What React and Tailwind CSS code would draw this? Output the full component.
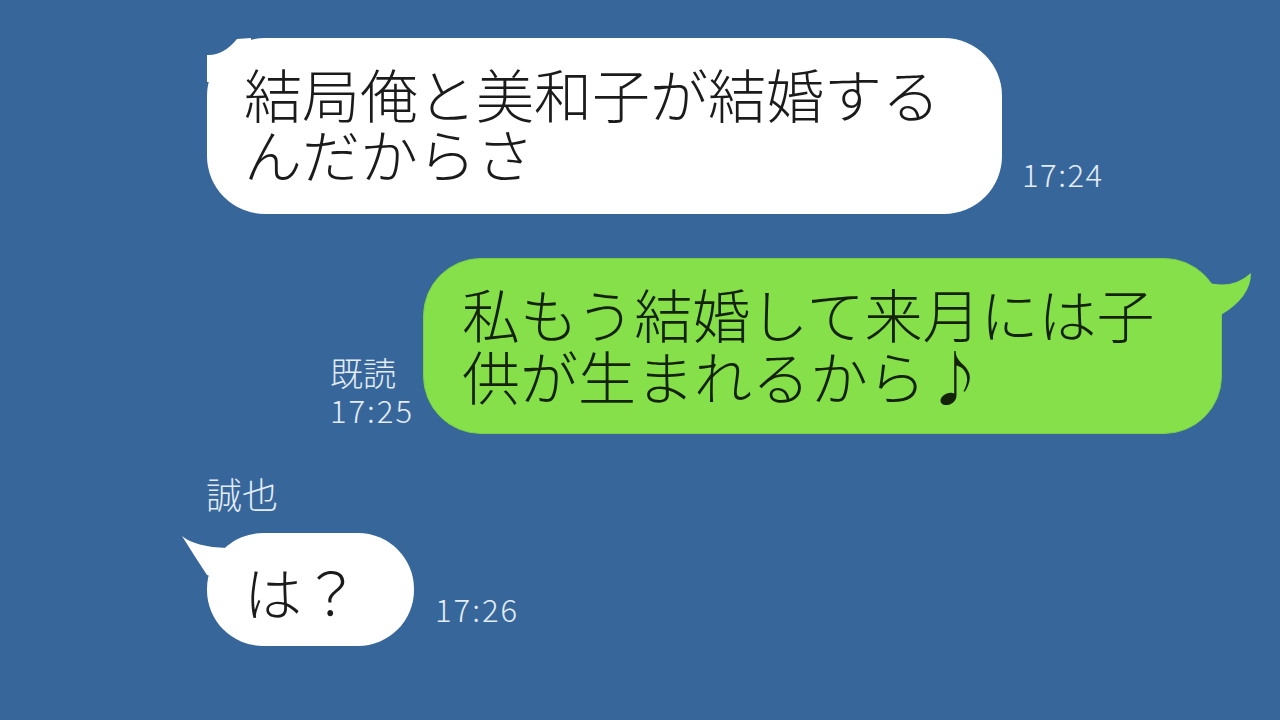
import React from "react";

const jp = "font-['Noto_Sans_CJK_JP','Noto_Sans',sans-serif]";

export default function App() {
  return (
    <div className={`w-[1280px] h-[720px] bg-[#37669b] overflow-hidden flex flex-col font-light ${jp}`}>
      {/* Row 1 */}
      <div className="flex items-end ml-[207px] mt-[38px]">
        <div className="relative w-[795px] h-[176px] rounded-[58px] bg-white pl-[37px] pt-[25px] text-[58px] leading-[60px] text-[#1b1b1b] whitespace-nowrap">
          <svg className="absolute left-0 top-0" width="44" height="44" viewBox="0 0 44 44">
            <path d="M0 17 Q16 18 30 1 L44 0 L44 44 L0 44 Z" fill="#ffffff" />
          </svg>
          <div className="relative">
            結局俺と美和子が結婚する
            <br />
            んだからさ
          </div>
        </div>
        <div className="ml-[20px] mb-[25px] text-[31px] leading-none tracking-[1.5px] text-[#e3ecf7]">17:24</div>
      </div>

      {/* Row 2 */}
      <div className="flex items-end justify-end mr-[58px] mt-[44px]">
        <div className="mr-[9px] mb-[6px] flex flex-col text-[31px] leading-[37px] text-[#e3ecf7]">
          <span className="text-[33px]">既読</span>
          <span className="tracking-[2px]">17:25</span>
        </div>
        <div className="relative w-[799px] h-[176px] rounded-[58px] bg-[#86e04a] border border-[#7bcf45] pl-[38px] pt-[23px] text-[58px] leading-[62px] text-[#142208] whitespace-nowrap">
          <svg className="absolute right-[-32px] top-[12px]" width="50" height="46" viewBox="0 0 50 46">
            <path d="M0 10 Q28 20 48 2 Q48 26 18 44 L0 44 Z" fill="#86e04a" />
          </svg>
          <div className="relative">
            私もう結婚して来月には子
            <br />
            供が生まれるから♪
          </div>
        </div>
      </div>

      {/* Row 3 */}
      <div className="ml-[206px] mt-[40px] text-[36px] leading-[38px] text-[#e3ecf7]">誠也</div>
      <div className="flex items-end ml-[207px] mt-[21px]">
        <div className="relative w-[207px] h-[113px] rounded-[56px] bg-white pl-[37px] pt-[28px] text-[58px] leading-[60px] text-[#1b1b1b] whitespace-nowrap">
          <svg className="absolute left-[-26px] top-[2px]" width="60" height="50" viewBox="0 0 60 50">
            <path d="M1 1 Q14 12 46 13 L60 10 L60 50 L26 40 Q14 22 1 1 Z" fill="#ffffff" />
          </svg>
          <div className="relative">は？</div>
        </div>
        <div className="ml-[21px] mb-[22px] text-[31px] leading-none tracking-[2px] text-[#e3ecf7]">17:26</div>
      </div>
    </div>
  );
}
